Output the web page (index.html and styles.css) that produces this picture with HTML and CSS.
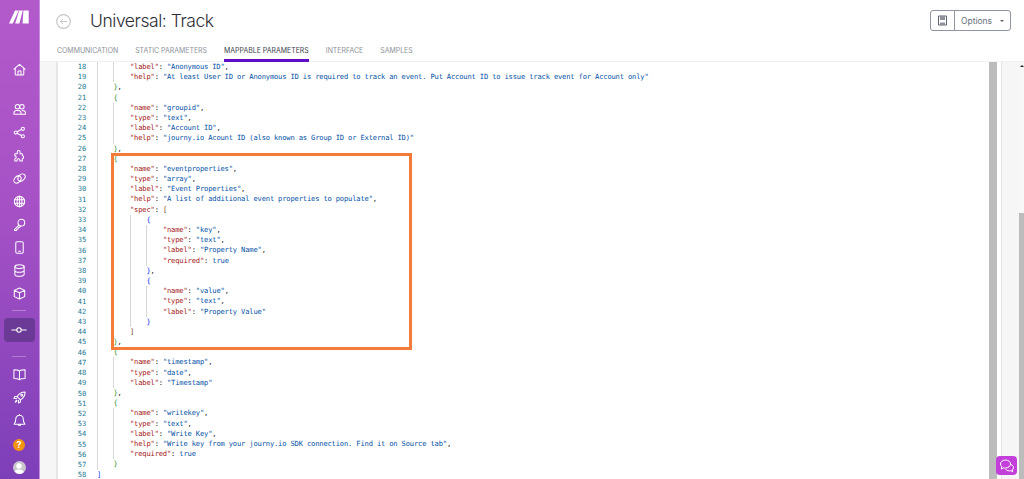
FILE: index.html
```html
<!DOCTYPE html>
<html lang="en">
<head>
<meta charset="utf-8">
<title>Universal: Track</title>
<link rel="stylesheet" href="styles.css">
</head>
<body>
<div class="app">
  <nav class="side">
    <div class="logo">
      <svg width="20" height="14" viewBox="0 0 20 14"><path fill="#fff" d="M0 13.500 6 .5h3.800L3.800 13.500zM6.200 13.500 10.200.5h3.600L10.400 13.500zM14.400.5h5.300V13.500h-6.100z"/></svg>
    </div>
    <div class="nav nav-home">
      <svg class="ic" viewBox="0 0 14 14"><path d="M1 6.600 7 1.500l6 5.100M2.400 5.600V12a.8.8 0 0 0 .8.8h7.600a.8.8 0 0 0 .8-.8V5.600M5.400 12.800V8.600h3.200v4.200"/></svg>
    </div>
    <div class="nav nav-first">
      <svg class="ic" viewBox="0 0 14 14"><circle cx="4.800" cy="4" r="2.400"/><circle cx="9.600" cy="4" r="2.400"/><path d="M1 12.200V10.600c0-1.600 1.400-2.600 3-2.600h1.600c1.600 0 3 1 3 2.600v1.600zM10 8c2 0 3.400 1 3.400 2.600v1.600H9"/></svg>
    </div>
    <div class="nav">
      <svg class="ic" viewBox="0 0 14 14"><circle cx="3" cy="7" r="1.700"/><circle cx="10.600" cy="3" r="1.700"/><circle cx="10.600" cy="11" r="1.700"/><path d="M4.500 6.200 9 3.800M4.500 7.800 9 10.200"/></svg>
    </div>
    <div class="nav">
      <svg class="ic" viewBox="0 0 14 14"><path d="M2 5h2.600V3.200a1.500 1.500 0 0 1 3 0V5H10v2.300a1.500 1.500 0 0 1 0 3V13H7.400v-1a1.500 1.500 0 0 0-3 0v1H2v-2.600a1.500 1.500 0 0 0 0-3z"/></svg>
    </div>
    <div class="nav">
      <svg class="ic" viewBox="0 0 14 14"><ellipse cx="4.800" cy="8" rx="3.200" ry="4.400" transform="rotate(45 4.800 8)"/><ellipse cx="9.200" cy="6" rx="3.200" ry="4.400" transform="rotate(45 9.200 6)"/></svg>
    </div>
    <div class="nav">
      <svg class="ic" viewBox="0 0 14 14"><circle cx="7" cy="7" r="5.600"/><ellipse cx="7" cy="7" rx="2.600" ry="5.600"/><path d="M1.600 5h10.800M1.600 9h10.800M7 1.400v11.200"/></svg>
    </div>
    <div class="nav">
      <svg class="ic" viewBox="0 0 14 14"><circle cx="9" cy="5" r="3.600"/><path d="M6.400 7.600 1.600 12.400v1h2l.6-1.400 1.200-.2.4-1.400 1.400-.4 1-1.200"/></svg>
    </div>
    <div class="nav">
      <svg class="ic" viewBox="0 0 14 14"><rect x="3" y=".8" width="8" height="12.400" rx="1.400"/><path d="M6 11h2"/></svg>
    </div>
    <div class="nav">
      <svg class="ic" viewBox="0 0 14 14"><ellipse cx="7" cy="2.800" rx="5" ry="2"/><path d="M2 2.800v8.400c0 1.100 2.200 2 5 2s5-.9 5-2V2.800M2 7c0 1.100 2.200 2 5 2s5-.9 5-2"/></svg>
    </div>
    <div class="nav">
      <svg class="ic" viewBox="0 0 14 14"><path d="M7 1 12.600 3.600v6.800L7 13 1.400 10.400V3.600zM1.400 3.600 7 6.200l5.600-2.600M7 6.200V13"/></svg>
    </div>
    <div class="rule rule-a"></div>
    <div class="nav active">
      <svg class="ic ic-wide" viewBox="0 0 16 10"><circle cx="8" cy="5" r="2.200"/><path d="M.8 5h4.800M10.400 5h4.800"/></svg>
    </div>
    <div class="rule rule-b"></div>
    <div class="nav">
      <svg class="ic" viewBox="0 0 14 14"><path d="M7 3.400C6 2.400 4.400 2 1 2v9.400c3.400 0 5 .4 6 1.200 1-.8 2.600-1.200 6-1.200V2C9.600 2 8 2.400 7 3.400zM7 3.400v9.200"/></svg>
    </div>
    <div class="nav">
      <svg class="ic" viewBox="0 0 14 14"><path d="M13 1c-3.600 0-6.600 1.600-8.600 5l3.600 3.600C11.400 7.600 13 4.600 13 1zM4.600 6H2L1 8h3M8 9.400V12l-2 1v-3M4 10c-1 .6-1.600 2-1.600 2s1.400-.4 2-1.400"/><circle cx="9.400" cy="4.600" r="1"/></svg>
    </div>
    <div class="nav">
      <svg class="ic" viewBox="0 0 14 14"><path d="M7 1.400a4 4 0 0 0-4 4c0 3.600-1.400 4.800-1.800 5.600h11.600c-.4-.8-1.800-2-1.800-5.600a4 4 0 0 0-4-4zM5.600 11.400a1.500 1.500 0 0 0 2.800 0M7 .4v1"/></svg>
    </div>
    <div class="nav nav-help">
      <span class="help">?</span>
    </div>
    <div class="nav nav-avatar">
      <span class="avatar">
        <svg width="12" height="12" viewBox="0 0 12 12"><circle cx="6" cy="4" r="2.700" fill="#fff"/><path fill="#fff" d="M.8 12c0-3 2.300-4.600 5.200-4.600s5.200 1.600 5.200 4.600z"/></svg>
      </span>
    </div>
  </nav>

  <main class="main">
    <header class="head">
      <div class="title-row">
        <span class="back">
          <svg width="15" height="15" viewBox="0 0 15 15"><circle cx="7.500" cy="7.500" r="6.800" fill="none" stroke="#c6c6c6" stroke-width="1.200"/><path d="M11 7.500H4.500M7 5 4.500 7.500 7 10" fill="none" stroke="#c6c6c6"/></svg>
        </span>
        <h1 class="title">Universal: Track</h1>
        <div class="btns">
          <button class="btn btn-save" type="button">
            <svg width="11" height="11" viewBox="0 0 11 11"><path d="M1.500 1h8v9h-8z" fill="none" stroke="#5f6670"/><path d="M3 1h5v4H3zM3 7.500h5v2.500H3z" fill="#8d929b"/></svg>
          </button>
          <button class="btn btn-opt" type="button">Options<span class="caret"></span></button>
        </div>
      </div>
      <div class="tabs">
        <span class="tab">Communication</span>
        <span class="tab">Static parameters</span>
        <span class="tab on">Mappable parameters</span>
        <span class="tab">Interface</span>
        <span class="tab">Samples</span>
      </div>
    </header>

    <section class="editor">
      <div class="strip"></div>
      <div class="gutter">
        <div>18</div><div>19</div><div>20</div><div>21</div><div>22</div><div>23</div><div>24</div><div>25</div><div>26</div><div>27</div>
        <div>28</div><div>29</div><div>30</div><div>31</div><div>32</div><div>33</div><div>34</div><div>35</div><div>36</div><div>37</div>
        <div>38</div><div>39</div><div>40</div><div>41</div><div>42</div><div>43</div><div>44</div><div>45</div><div>46</div><div>47</div>
        <div>48</div><div>49</div><div>50</div><div>51</div><div>52</div><div>53</div><div>54</div><div>55</div><div>56</div><div>57</div><div>58</div>
      </div>
      <div class="code">
        <div class="ln"><i class="g"></i><i class="g"></i><b class="k">"label"</b>: <b class="s">"Anonymous ID"</b>,</div>
        <div class="ln"><i class="g"></i><i class="g"></i><b class="k">"help"</b>: <b class="s">"At least User ID or Anonymous ID is required to track an event. Put Account ID to issue track event for Account only"</b></div>
        <div class="ln"><i class="g"></i><b class="b1">}</b>,</div>
        <div class="ln"><i class="g"></i><b class="b1">{</b></div>
        <div class="ln"><i class="g"></i><i class="g"></i><b class="k">"name"</b>: <b class="s">"groupid"</b>,</div>
        <div class="ln"><i class="g"></i><i class="g"></i><b class="k">"type"</b>: <b class="s">"text"</b>,</div>
        <div class="ln"><i class="g"></i><i class="g"></i><b class="k">"label"</b>: <b class="s">"Account ID"</b>,</div>
        <div class="ln"><i class="g"></i><i class="g"></i><b class="k">"help"</b>: <b class="s">"journy.io Acount ID (also known as Group ID or External ID)"</b></div>
        <div class="ln"><i class="g"></i><b class="b1">}</b>,</div>
        <div class="ln"><i class="g"></i><b class="b1">{</b></div>
        <div class="ln"><i class="g"></i><i class="g"></i><b class="k">"name"</b>: <b class="s">"eventproperties"</b>,</div>
        <div class="ln"><i class="g"></i><i class="g"></i><b class="k">"type"</b>: <b class="s">"array"</b>,</div>
        <div class="ln"><i class="g"></i><i class="g"></i><b class="k">"label"</b>: <b class="s">"Event Properties"</b>,</div>
        <div class="ln"><i class="g"></i><i class="g"></i><b class="k">"help"</b>: <b class="s">"A list of additional event properties to populate"</b>,</div>
        <div class="ln"><i class="g"></i><i class="g"></i><b class="k">"spec"</b>: <b class="b2">[</b></div>
        <div class="ln"><i class="g"></i><i class="g"></i><i class="g"></i><b class="b3">{</b></div>
        <div class="ln"><i class="g"></i><i class="g"></i><i class="g"></i><i class="g"></i><b class="k">"name"</b>: <b class="s">"key"</b>,</div>
        <div class="ln"><i class="g"></i><i class="g"></i><i class="g"></i><i class="g"></i><b class="k">"type"</b>: <b class="s">"text"</b>,</div>
        <div class="ln"><i class="g"></i><i class="g"></i><i class="g"></i><i class="g"></i><b class="k">"label"</b>: <b class="s">"Property Name"</b>,</div>
        <div class="ln"><i class="g"></i><i class="g"></i><i class="g"></i><i class="g"></i><b class="k">"required"</b>: <b class="s">true</b></div>
        <div class="ln"><i class="g"></i><i class="g"></i><i class="g"></i><b class="b3">}</b>,</div>
        <div class="ln"><i class="g"></i><i class="g"></i><i class="g"></i><b class="b3">{</b></div>
        <div class="ln"><i class="g"></i><i class="g"></i><i class="g"></i><i class="g"></i><b class="k">"name"</b>: <b class="s">"value"</b>,</div>
        <div class="ln"><i class="g"></i><i class="g"></i><i class="g"></i><i class="g"></i><b class="k">"type"</b>: <b class="s">"text"</b>,</div>
        <div class="ln"><i class="g"></i><i class="g"></i><i class="g"></i><i class="g"></i><b class="k">"label"</b>: <b class="s">"Property Value"</b></div>
        <div class="ln"><i class="g"></i><i class="g"></i><i class="g"></i><b class="b3">}</b></div>
        <div class="ln"><i class="g"></i><i class="g"></i><b class="b2">]</b></div>
        <div class="ln"><i class="g"></i><b class="b1">}</b>,</div>
        <div class="ln"><i class="g"></i><b class="b1">{</b></div>
        <div class="ln"><i class="g"></i><i class="g"></i><b class="k">"name"</b>: <b class="s">"timestamp"</b>,</div>
        <div class="ln"><i class="g"></i><i class="g"></i><b class="k">"type"</b>: <b class="s">"date"</b>,</div>
        <div class="ln"><i class="g"></i><i class="g"></i><b class="k">"label"</b>: <b class="s">"Timestamp"</b></div>
        <div class="ln"><i class="g"></i><b class="b1">}</b>,</div>
        <div class="ln"><i class="g"></i><b class="b1">{</b></div>
        <div class="ln"><i class="g"></i><i class="g"></i><b class="k">"name"</b>: <b class="s">"writekey"</b>,</div>
        <div class="ln"><i class="g"></i><i class="g"></i><b class="k">"type"</b>: <b class="s">"text"</b>,</div>
        <div class="ln"><i class="g"></i><i class="g"></i><b class="k">"label"</b>: <b class="s">"Write Key"</b>,</div>
        <div class="ln"><i class="g"></i><i class="g"></i><b class="k">"help"</b>: <b class="s">"Write key from your journy.io SDK connection. Find it on Source tab"</b>,</div>
        <div class="ln"><i class="g"></i><i class="g"></i><b class="k">"required"</b>: <b class="s">true</b></div>
        <div class="ln"><i class="g"></i><b class="b1">}</b></div>
        <div class="ln"><b class="b3">]</b></div>
      </div>
      <div class="scroll-a"></div>
      <div class="gap"></div>
      <div class="panel"></div>
      <div class="scroll-b">
        <div class="arrow"></div>
        <div class="thumb"></div>
      </div>
      <div class="highlight"></div>
    </section>
  </main>

  <button class="chat" type="button" aria-label="Chat">
    <svg width="16" height="14" viewBox="0 0 16 14"><path d="M6.500 1C3.800 1 1.500 2.700 1.500 5c0 1.100.5 2 1.300 2.700L2.300 10l2.300-1.200c.6.200 1.200.2 1.900.2 2.700 0 5-1.700 5-4s-2.300-4-5-4z" fill="none" stroke="#fff"/><path d="M11.800 5.500c1.600.5 2.700 1.700 2.700 3.100 0 .9-.5 1.700-1.200 2.300l.4 1.800-2-1c-.5.100-1 .2-1.500.2-1.500 0-2.900-.7-3.600-1.700" fill="none" stroke="#fff"/></svg>
  </button>
</div>
</body>
</html>
```

FILE: styles.css
```css
* { box-sizing: border-box; }
html, body { margin: 0; height: 100%; overflow: hidden; background: #fff; }
body { font-family: "Inter", "Liberation Sans", sans-serif; }

.app { display: flex; height: 479px; width: 1024px; overflow: hidden; position: relative; }

/* sidebar */
.side {
  width: 40px; flex: none; display: flex; flex-direction: column; align-items: center;
  padding-right: 1px;
  background: linear-gradient(180deg, #b35acb 0%, #a551c5 45%, #7d3fb8 100%);
  border-right: 1px solid #c58ee0;
}
.logo { height: 16px; margin-top: 10px; display: flex; align-items: center; justify-content: center; }
.nav { height: 23.100px; width: 100%; display: flex; align-items: center; justify-content: center; flex: none; }
.nav-home { margin-top: 33px; }
.nav-first { margin-top: 17px; }
.nav-help { margin-top: 2px; }
.nav-avatar { margin-top: -1px; }
.ic { width: 13px; height: 13px; fill: none; stroke: #fff; stroke-width: 1.100; stroke-linejoin: round; stroke-linecap: round; }
.ic-wide { width: 16px; height: 10px; }
.rule { width: 14px; height: 1px; background: rgba(255,255,255,.3); flex: none; }
.rule-a { margin-top: 5px; margin-bottom: 7px; }
.rule-b { margin-top: 14px; margin-bottom: 6px; }
.active { width: 31px; border-radius: 4px; background: #6b3a96; }
.help {
  width: 12px; height: 12px; border-radius: 50%; background: #f5920f; color: #fff;
  font-size: 9px; font-weight: 700; line-height: 12px; text-align: center;
}
.avatar {
  width: 13px; height: 13px; border-radius: 50%; background: #c9c7cc; overflow: hidden;
  display: flex; align-items: flex-end; justify-content: center;
}

/* main */
.main { flex: 1; min-width: 0; display: flex; flex-direction: column; }
.head { height: 62px; flex: none; border-bottom: 1px solid #f1f1f1; }
.title-row { height: 42px; display: flex; align-items: center; padding-left: 16px; padding-right: 13px; }
.back { width: 15px; height: 15px; display: block; line-height: 0; }
.title { margin: 0 0 0 19px; font-size: 17.500px; letter-spacing: -.45px; font-weight: 350; color: #2e2e36; line-height: 42px; }
.btns { margin-left: auto; display: flex; align-self: flex-start; margin-top: 10px; }
.btn {
  height: 21px; background: #fff; border: 1px solid #8f95a0; color: #69707c;
  font-family: "Inter", "Liberation Sans", sans-serif; font-size: 8.500px; padding: 0;
  display: flex; align-items: center; justify-content: center;
}
.btn-save { width: 25px; border-radius: 3px 0 0 3px; }
.btn-opt { width: 57px; margin-left: -1px; border-radius: 0 3px 3px 0; }
.caret {
  margin-left: 8px; width: 0; height: 0;
  border-left: 2.500px solid transparent; border-right: 2.500px solid transparent; border-top: 2.500px solid #5a6070;
}
.tabs { height: 19px; display: flex; gap: 17px; padding-left: 17px; }
.tab {
  height: 20px; font-size: 6.950px; line-height: 17px; text-transform: uppercase; color: #8d929b; white-space: nowrap;
}
.tab.on { color: #3b3f4a; border-bottom: 3px solid #5c0fc4; }

/* editor */
.editor { flex: 1; min-height: 0; display: flex; position: relative; overflow: hidden; background: #fff; }
.strip { flex: none; background: #f6f6f6; border-right: 2px solid #e6e6e6; width: 18px; }
.gutter, .code {
  font-family: "DejaVu Sans Mono", "Liberation Mono", monospace; font-size: 7.100px; line-height: 10.200px;
  letter-spacing: -.155px; text-rendering: geometricPrecision;
}
.gutter { width: 39px; flex: none; text-align: right; padding-right: 11px; color: #237893; }
.code { flex: 1; min-width: 0; color: #111; overflow: hidden; }
.ln { height: 10.200px; white-space: pre; }
.g { display: inline-block; width: 16.480px; height: 10.200px; vertical-align: top; border-left: 1px solid #d6d6d6; }
.code b { font-weight: 400; }
.k { color: #a31515; }
.s { color: #0451a5; }
.b1 { color: #319331; }
.b2 { color: #7b3814; }
.b3 { color: #0431fa; }

.scroll-a { width: 8px; flex: none; background: #bcbcbc; }
.gap { width: 4px; flex: none; }
.panel { width: 18px; flex: none; background: #f6f6f6; border-left: 1px solid #e4e4e4; }
.scroll-b { width: 5px; flex: none; background: #f7f7f7; display: flex; flex-direction: column; }
.arrow {
  margin: 3px 0 0 1px; width: 0; height: 0; flex: none;
  border-left: 2px solid transparent; border-right: 2px solid transparent; border-bottom: 2px solid #222;
}
.thumb { margin-top: 146px; flex: 1; background: #bcbcbc; }

.highlight {
  position: absolute; left: 71px; top: 91px; width: 301px; height: 197px;
  border: 3px solid #f47b3a; pointer-events: none;
}
.chat {
  position: absolute; left: 996px; top: 456px; width: 21px; height: 19px; padding: 0;
  background: #c23fd9; border: 0; border-radius: 4px;
  display: flex; align-items: center; justify-content: center;
}
```
